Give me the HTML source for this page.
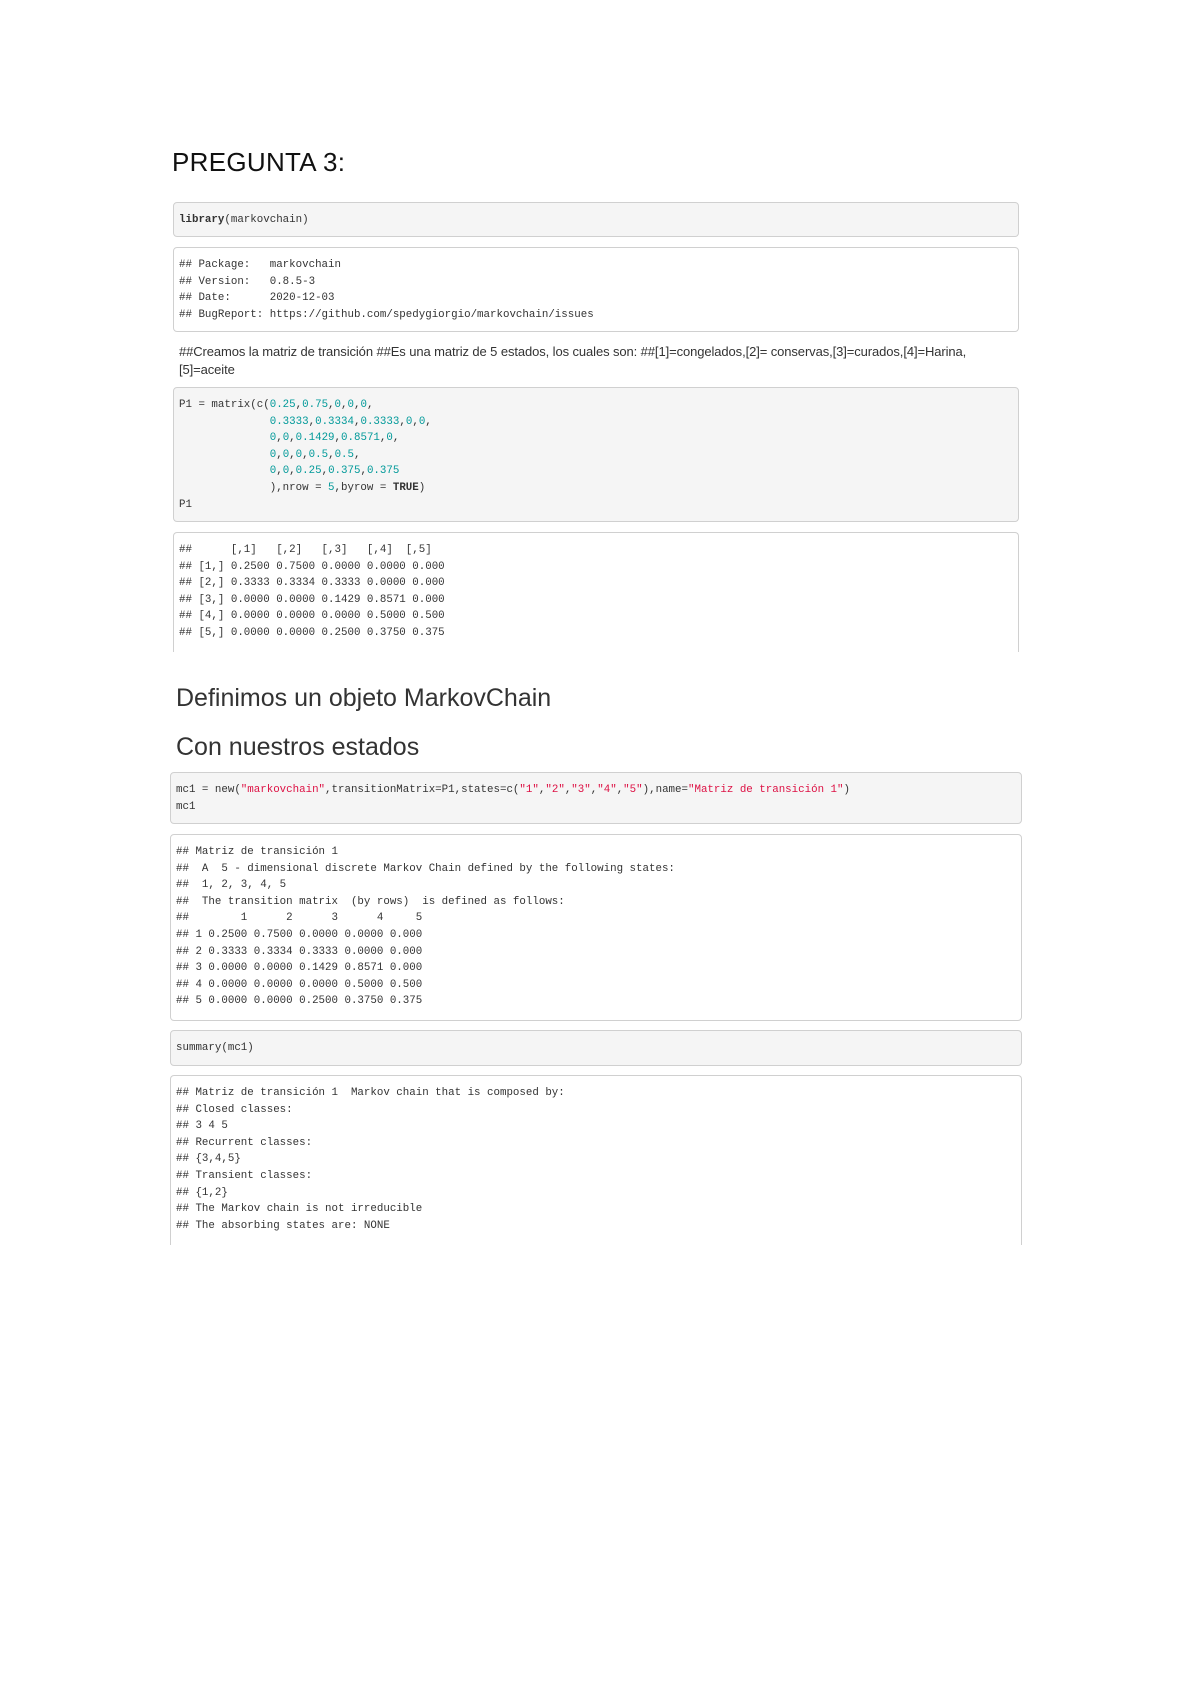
<!DOCTYPE html>
<html><head><meta charset="utf-8"><style>
body{margin:0;width:1200px;height:1696px;background:#fff;position:relative;overflow:hidden;font-family:"Liberation Sans",Arial,sans-serif;}
.a{position:absolute;}
.box{position:absolute;border:1px solid #d0d0d0;border-radius:4px;box-sizing:border-box;}
.code{background:#f5f5f5;}
.out{background:#fff;}
pre{margin:0;font-family:"Liberation Mono",monospace;font-size:10.8px;line-height:16.6px;color:#333;position:absolute;white-space:pre;}
.n{color:#099}.s{color:#d14}.k{color:#333;font-weight:bold}
</style></head><body>
<div class="a" style="left:172px;top:147px;font-size:26px;letter-spacing:0.3px;color:#111;">PREGUNTA 3:</div>

<div class="box code" style="left:173px;top:202px;width:846px;height:35px;"></div>
<pre style="left:179px;top:212px;"><span class="k">library</span>(markovchain)</pre>

<div class="box out" style="left:173px;top:247px;width:846px;height:85px;"></div>
<pre style="left:179px;top:257px;">## Package:   markovchain
## Version:   0.8.5-3
## Date:      2020-12-03
## BugReport: https://github.com/spedygiorgio/markovchain/issues</pre>

<div class="a" style="left:179px;top:343px;font-size:13px;line-height:18px;color:#333;width:820px;letter-spacing:-0.1px;">##Creamos la matriz de transición ##Es una matriz de 5 estados, los cuales son: ##[1]=congelados,[2]= conservas,[3]=curados,[4]=Harina,<br>[5]=aceite</div>

<div class="box code" style="left:173px;top:387px;width:846px;height:135px;"></div>
<pre style="left:179px;top:397px;">P1 = matrix(c(<span class="n">0.25</span>,<span class="n">0.75</span>,<span class="n">0</span>,<span class="n">0</span>,<span class="n">0</span>,
              <span class="n">0.3333</span>,<span class="n">0.3334</span>,<span class="n">0.3333</span>,<span class="n">0</span>,<span class="n">0</span>,
              <span class="n">0</span>,<span class="n">0</span>,<span class="n">0.1429</span>,<span class="n">0.8571</span>,<span class="n">0</span>,
              <span class="n">0</span>,<span class="n">0</span>,<span class="n">0</span>,<span class="n">0.5</span>,<span class="n">0.5</span>,
              <span class="n">0</span>,<span class="n">0</span>,<span class="n">0.25</span>,<span class="n">0.375</span>,<span class="n">0.375</span>
              ),nrow = <span class="n">5</span>,byrow = <span class="k">TRUE</span>)
P1</pre>

<div class="box out" style="left:173px;top:532px;width:846px;height:120px;border-bottom:none;border-radius:4px 4px 0 0;"></div>
<pre style="left:179px;top:542px;">##      [,1]   [,2]   [,3]   [,4]  [,5]
## [1,] 0.2500 0.7500 0.0000 0.0000 0.000
## [2,] 0.3333 0.3334 0.3333 0.0000 0.000
## [3,] 0.0000 0.0000 0.1429 0.8571 0.000
## [4,] 0.0000 0.0000 0.0000 0.5000 0.500
## [5,] 0.0000 0.0000 0.2500 0.3750 0.375</pre>

<div class="a" style="left:176px;top:684px;font-size:25px;color:#333;">Definimos un objeto MarkovChain</div>
<div class="a" style="left:176px;top:733px;font-size:25px;color:#333;">Con nuestros estados</div>

<div class="box code" style="left:170px;top:772px;width:852px;height:52px;"></div>
<pre style="left:176px;top:782px;">mc1 = new(<span class="s">"markovchain"</span>,transitionMatrix=P1,states=c(<span class="s">"1"</span>,<span class="s">"2"</span>,<span class="s">"3"</span>,<span class="s">"4"</span>,<span class="s">"5"</span>),name=<span class="s">"Matriz de transición 1"</span>)
mc1</pre>

<div class="box out" style="left:170px;top:834px;width:852px;height:187px;"></div>
<pre style="left:176px;top:844px;">## Matriz de transición 1 
##  A  5 - dimensional discrete Markov Chain defined by the following states: 
##  1, 2, 3, 4, 5 
##  The transition matrix  (by rows)  is defined as follows: 
##        1      2      3      4     5
## 1 0.2500 0.7500 0.0000 0.0000 0.000
## 2 0.3333 0.3334 0.3333 0.0000 0.000
## 3 0.0000 0.0000 0.1429 0.8571 0.000
## 4 0.0000 0.0000 0.0000 0.5000 0.500
## 5 0.0000 0.0000 0.2500 0.3750 0.375</pre>

<div class="box code" style="left:170px;top:1030px;width:852px;height:36px;"></div>
<pre style="left:176px;top:1040px;">summary(mc1)</pre>

<div class="box out" style="left:170px;top:1075px;width:852px;height:170px;border-bottom:none;border-radius:4px 4px 0 0;"></div>
<pre style="left:176px;top:1085px;">## Matriz de transición 1  Markov chain that is composed by: 
## Closed classes: 
## 3 4 5 
## Recurrent classes: 
## {3,4,5}
## Transient classes: 
## {1,2}
## The Markov chain is not irreducible 
## The absorbing states are: NONE</pre>
</body></html>
